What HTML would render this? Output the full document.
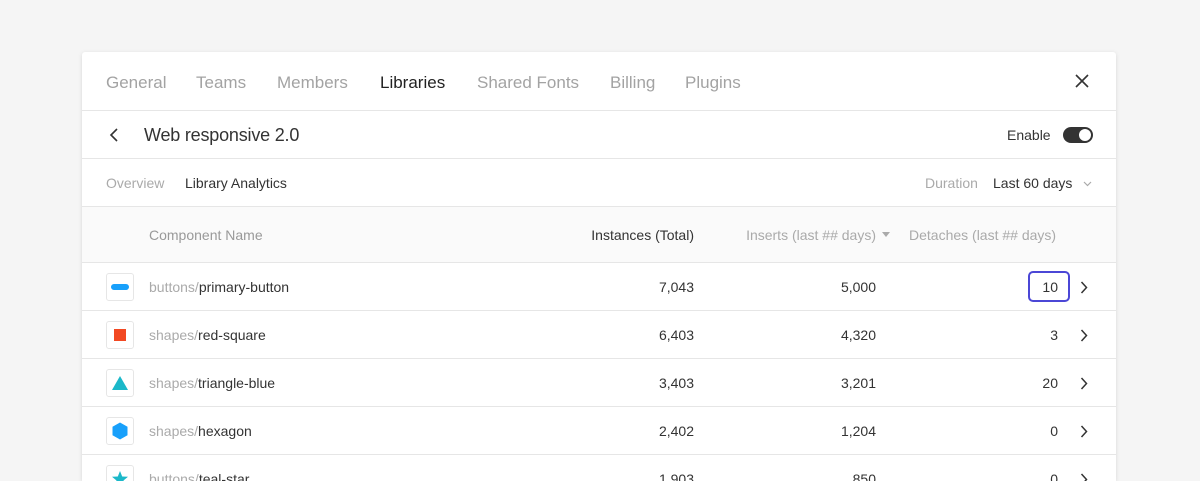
<!DOCTYPE html>
<html style="width:1200px;height:481px;overflow:hidden"><head><style>
*{margin:0;padding:0;box-sizing:border-box}
body{width:1200px;height:481px;background:#f5f5f5;font-family:"Liberation Sans",sans-serif;overflow:hidden;position:relative}
.card{position:absolute;left:82px;top:52px;width:1034px;height:429px;background:#fff;border-radius:3px 3px 0 0;box-shadow:0 1px 4px rgba(0,0,0,.12)}
.a{position:absolute;white-space:nowrap;line-height:1}
.line{position:absolute;left:0;width:1034px;height:1px;background:#e6e6e6}
.tab{font-size:17px;color:#a3a3a3;top:22px}
.g{color:#aaa}
.d{color:#333}
.row{font-size:14px}
.ic{position:absolute;left:24px;width:28px;height:28px;border:1px solid #e6e6e6;border-radius:3px;background:#fff}
.num{position:absolute;font-size:14px;color:#333;text-align:right;line-height:1}
</style></head><body>
<div class="card">
<div class="a tab" style="left:24px">General</div>
<div class="a tab" style="left:114px">Teams</div>
<div class="a tab" style="left:195px">Members</div>
<div class="a tab" style="left:298px;color:#222">Libraries</div>
<div class="a tab" style="left:395px">Shared Fonts</div>
<div class="a tab" style="left:528px">Billing</div>
<div class="a tab" style="left:603px">Plugins</div>
<svg class="a" style="left:993px;top:22px" width="14" height="14" viewBox="0 0 14 14"><path d="M1 1L13 13M13 1L1 13" stroke="#333" stroke-width="1.6"/></svg>
<div class="line" style="top:58px"></div>
<svg class="a" style="left:27px;top:76px" width="10" height="14" viewBox="0 0 10 14"><path d="M8 1L2 7L8 13" stroke="#333" stroke-width="1.6" fill="none"/></svg>
<div class="a" style="left:62px;top:74px;font-size:18px;color:#333;letter-spacing:-0.2px">Web responsive 2.0</div>
<div class="a" style="left:925px;top:76px;font-size:14px;color:#333">Enable</div>
<div class="a" style="left:981px;top:75px;width:30px;height:16px;border-radius:8px;background:#333"><div style="position:absolute;right:2px;top:2px;width:12px;height:12px;border-radius:50%;background:#fff"></div></div>
<div class="line" style="top:106px"></div>
<div class="a" style="left:24px;top:124px;font-size:14px;color:#aaa">Overview</div>
<div class="a" style="left:103px;top:124px;font-size:14px;color:#333">Library Analytics</div>
<div class="a" style="left:843px;top:124px;font-size:14px;color:#aaa">Duration</div>
<div class="a" style="left:911px;top:124px;font-size:14px;color:#333">Last 60 days</div>
<svg class="a" style="left:1001px;top:129px" width="9" height="6" viewBox="0 0 9 6"><path d="M1 1L4.5 4.5L8 1" stroke="#aaa" stroke-width="1.2" fill="none"/></svg>
<div class="line" style="top:154px"></div>
<div style="position:absolute;left:0;top:155px;width:1034px;height:55px;background:#fafafa"></div>
<div class="a" style="left:67px;top:176px;font-size:14px;color:#999">Component Name</div>
<div class="num" style="right:422px;top:176px">Instances (Total)</div>
<div class="num" style="right:240px;top:176px;color:#aaa">Inserts (last ## days)</div>
<svg class="a" style="left:800px;top:180px" width="8" height="5"><path d="M0 0H8L4 5Z" fill="#aaa"/></svg>
<div class="a" style="left:827px;top:176px;font-size:14px;color:#aaa">Detaches (last ## days)</div>
<div class="line" style="top:210px"></div>

<div class="ic" style="top:221px"><div style="position:absolute;left:4px;top:10px;width:18px;height:6px;border-radius:3px;background:#18a0fb"></div></div>
<div class="a row" style="left:67px;top:228px"><span class="g">buttons/</span><span class="d">primary-button</span></div>
<div class="num" style="right:422px;top:228px">7,043</div>
<div class="num" style="right:240px;top:228px">5,000</div>
<div class="a" style="left:946px;top:219px;width:42px;height:31px;border:2px solid #4b47d6;border-radius:5px"></div>
<div class="num" style="right:58px;top:228px">10</div>
<div class="line" style="top:258px"></div>

<div class="ic" style="top:269px"><div style="position:absolute;left:7px;top:7px;width:12px;height:12px;background:#f24822"></div></div>
<div class="a row" style="left:67px;top:276px"><span class="g">shapes/</span><span class="d">red-square</span></div>
<div class="num" style="right:422px;top:276px">6,403</div>
<div class="num" style="right:240px;top:276px">4,320</div>
<div class="num" style="right:58px;top:276px">3</div>
<div class="line" style="top:306px"></div>

<div class="ic" style="top:317px"><svg style="position:absolute;left:4px;top:4px" width="18" height="18"><path d="M9 2L17 16H1Z" fill="#1bb8c9"/></svg></div>
<div class="a row" style="left:67px;top:324px"><span class="g">shapes/</span><span class="d">triangle-blue</span></div>
<div class="num" style="right:422px;top:324px">3,403</div>
<div class="num" style="right:240px;top:324px">3,201</div>
<div class="num" style="right:58px;top:324px">20</div>
<div class="line" style="top:354px"></div>

<div class="ic" style="top:365px"><svg style="position:absolute;left:4px;top:4px" width="18" height="18"><path d="M9 0.5L16.5 4.8V13.2L9 17.5L1.5 13.2V4.8Z" fill="#18a0fb"/></svg></div>
<div class="a row" style="left:67px;top:372px"><span class="g">shapes/</span><span class="d">hexagon</span></div>
<div class="num" style="right:422px;top:372px">2,402</div>
<div class="num" style="right:240px;top:372px">1,204</div>
<div class="num" style="right:58px;top:372px">0</div>
<div class="line" style="top:402px"></div>

<div class="ic" style="top:413px"><svg style="position:absolute;left:4px;top:4px" width="18" height="18"><path d="M9 1L11.2 6.5L17 6.8L12.5 10.5L14 16.5L9 13.2L4 16.5L5.5 10.5L1 6.8L6.8 6.5Z" fill="#1bb8c9"/></svg></div>
<div class="a row" style="left:67px;top:420px"><span class="g">buttons/</span><span class="d">teal-star</span></div>
<div class="num" style="right:422px;top:420px">1,903</div>
<div class="num" style="right:240px;top:420px">850</div>
<div class="num" style="right:58px;top:420px">0</div>

<svg class="a" style="left:998px;top:229px" width="8" height="13"><path d="M1.5 1L6.5 6.5L1.5 12" stroke="#333" stroke-width="1.5" fill="none"/></svg>
<svg class="a" style="left:998px;top:277px" width="8" height="13"><path d="M1.5 1L6.5 6.5L1.5 12" stroke="#333" stroke-width="1.5" fill="none"/></svg>
<svg class="a" style="left:998px;top:325px" width="8" height="13"><path d="M1.5 1L6.5 6.5L1.5 12" stroke="#333" stroke-width="1.5" fill="none"/></svg>
<svg class="a" style="left:998px;top:373px" width="8" height="13"><path d="M1.5 1L6.5 6.5L1.5 12" stroke="#333" stroke-width="1.5" fill="none"/></svg>
<svg class="a" style="left:998px;top:421px" width="8" height="13"><path d="M1.5 1L6.5 6.5L1.5 12" stroke="#333" stroke-width="1.5" fill="none"/></svg>
</div>
</body></html>
